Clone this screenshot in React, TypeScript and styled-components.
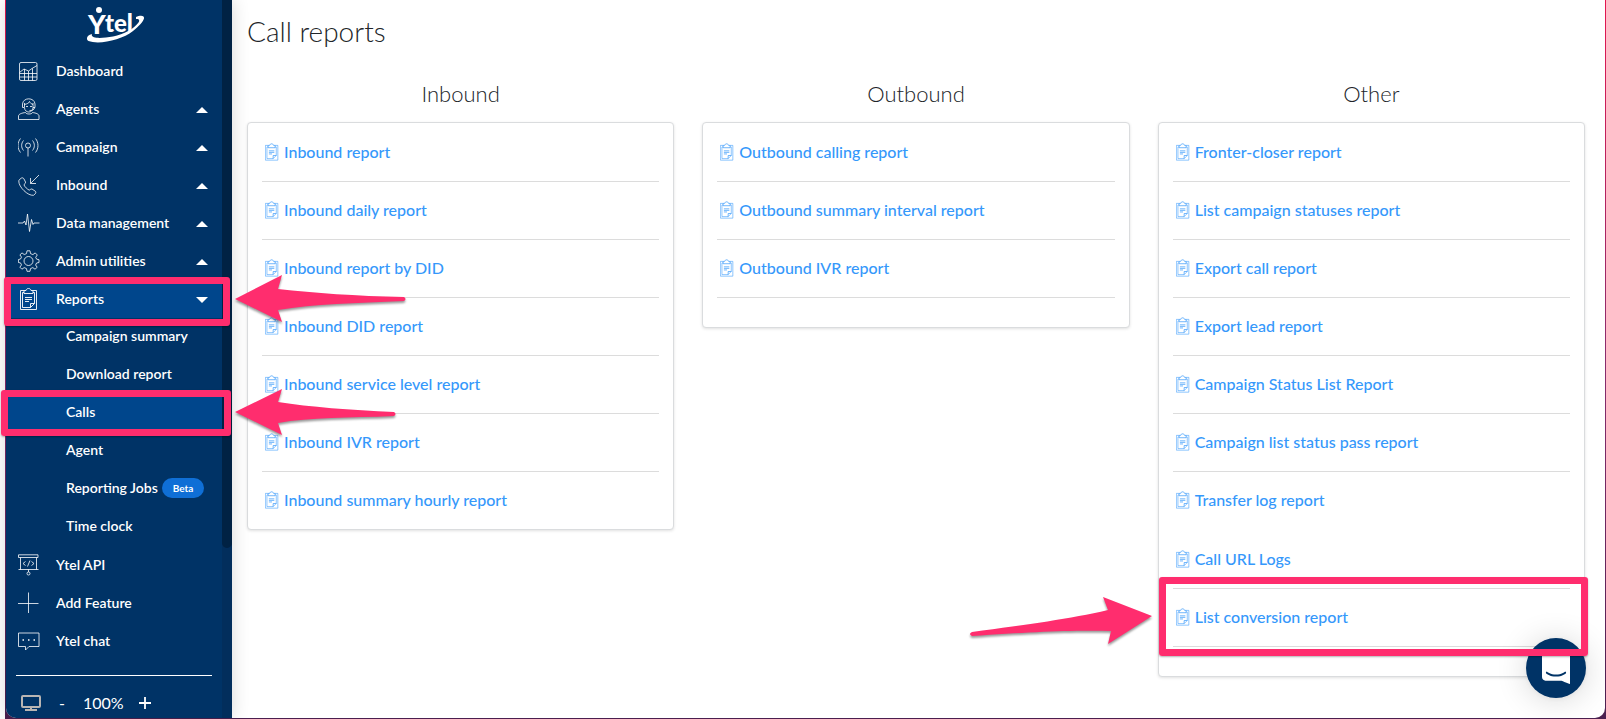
import React from 'react';
import styled, { createGlobalStyle, css } from 'styled-components';

const navy = '#003366';
const pink = '#ff2d6e';

const GlobalStyle = createGlobalStyle`
  *, *::before, *::after { box-sizing: border-box; }
  body {
    margin: 0;
    background: #fff;
    font-family: Lato, "Liberation Sans", sans-serif;
    color: #212529;
  }
  ul { list-style: none; margin: 0; padding: 0; }
  a { text-decoration: none; color: inherit; }
`;

const Frame = styled.div`
  display: flex;
  min-height: 100vh;
  margin-left: 5px;
  padding: 0 1px 1px;
  background: linear-gradient(to bottom, #e4164f, #8a2b6c 50%, #4b1f4f);
`;

const Window = styled.div`
  flex: 1;
  display: flex;
  min-width: 0;
  background: #fff;
  border-radius: 0 0 10px 10px;
`;

const Sidebar = styled.aside`
  position: relative;
  z-index: 2;
  flex: none;
  display: flex;
  width: 226px;
  background: ${navy};
  color: #fff;
  border-bottom-left-radius: 10px;
  box-shadow: 0 0 18px rgba(0, 0, 0, 0.16);
`;

const SidebarContent = styled.div`
  flex: 1;
`;

const ScrollTrack = styled.div`
  flex: none;
  width: 10px;
  background: #022e5c;
`;

const ScrollThumb = styled.div`
  height: 548px;
  border-radius: 0 0 5px 5px;
  background: #002244;
`;

const LogoLink = styled.a`
  display: flex;
  justify-content: center;
  height: 52px;
  padding: 6px 0 0 2px;
`;

const NavItem = styled.li`
  position: relative;
`;

const NavLink = styled.a<{ $active?: boolean }>`
  display: flex;
  align-items: center;
  gap: 16px;
  height: 38px;
  padding: 0 14px 0 12px;
  font-size: 14px;
  font-weight: 600;
  line-height: 20px;
  background: ${p => (p.$active ? '#00468c' : 'transparent')};
  svg { flex: none; }
`;

const NavLabel = styled.span`
  flex: 1;
`;

const SubLink = styled(NavLink)`
  gap: 4px;
  padding: 0 0 2px 60px;
`;

const Badge = styled.span`
  padding: 0 11px;
  border-radius: 10px;
  background: #0f6fd6;
  font-size: 10px;
  font-weight: 700;
  line-height: 20px;
`;

const Caret = styled.span<{ $down?: boolean }>`
  border: 6px solid transparent;
  ${p => p.$down
    ? css`border-top-color: #fff; border-bottom: 0;`
    : css`border-bottom-color: #fff; border-top: 0;`}
  margin-top: 2px;
`;

const ZoomBar = styled.div`
  display: flex;
  align-items: center;
  margin: 15px 10px 0;
  padding: 12px 0 0 5px;
  border-top: 1px solid #fff;
  font-size: 16px;
  line-height: 30px;
`;

const ZoomButton = styled.button`
  width: 42px;
  height: 30px;
  padding: 0;
  border: 0;
  background: none;
  color: #fff;
  font: inherit;
  font-size: 16px;
  display: grid;
  place-items: center;
`;

const Main = styled.main`
  flex: 1;
  min-width: 0;
  padding: 13px 20px 28px 15px;
`;

const PageTitle = styled.h1`
  margin: 0;
  font-size: 28px;
  font-weight: 300;
  line-height: 36px;
`;

const Columns = styled.div`
  display: grid;
  grid-template-columns: repeat(3, minmax(0, 1fr));
  align-items: start;
  gap: 28px;
  margin-top: 30px;
`;

const ColumnTitle = styled.h2`
  margin: 0 0 13px;
  font-size: 22px;
  font-weight: 300;
  line-height: 30px;
  text-align: center;
`;

const Card = styled.ul<{ $footer?: boolean }>`
  display: grid;
  row-gap: 1px;
  padding: 1px 14px ${p => (p.$footer ? 30 : 0)}px;
  border: 1px solid #dadcde;
  border-radius: 4px;
  background: #fff;
  box-shadow: 0 1px 3px rgba(0, 0, 0, 0.12);
`;

const ReportRow = styled.li<{ $divider: boolean }>`
  position: relative;
  display: flex;
  align-items: center;
  height: 57px;
  padding: 0 0 2px 3px;
  box-shadow: ${p => (p.$divider ? '0 1px 0 #dcdcdc' : 'none')};
  &:not(:last-child) { margin-bottom: ${p => (p.$divider ? 0 : 1)}px; }
`;

const ReportLink = styled.a`
  display: flex;
  align-items: center;
  gap: 5px;
  color: #3598fb;
  font-size: 16px;
  font-weight: 500;
  line-height: 22px;
`;

const ChatButton = styled.button`
  position: fixed;
  right: 20px;
  bottom: 21px;
  z-index: 1;
  display: grid;
  place-items: center;
  width: 60px;
  height: 60px;
  padding: 0;
  border: 0;
  border-radius: 50%;
  background: ${navy};
  box-shadow: 0 1px 6px rgba(0, 0, 0, 0.06), 0 2px 32px rgba(0, 0, 0, 0.16);
`;

const Highlight = styled.span<{ $inset: string }>`
  position: absolute;
  z-index: 3;
  inset: ${p => p.$inset};
  border: 7px solid ${pink};
  border-radius: 3px;
  box-shadow: 0 1px 2px rgba(0, 0, 0, 0.3);
  pointer-events: none;
`;

const Pointer = styled.svg<{ $side: 'left' | 'right' }>`
  position: absolute;
  z-index: 3;
  top: 50%;
  ${p => (p.$side === 'right'
    ? css`left: 229px; margin-top: -24px;`
    : css`right: calc(100% + 21px); margin-top: -22px;`)}
  overflow: visible;
  filter: drop-shadow(0 2px 1px rgba(0, 0, 0, 0.4));
  pointer-events: none;
`;

const Logo = () => (
  <svg width="62" height="38" viewBox="0 0 62 38" fill="#fff" role="img" aria-label="Ytel">
    <circle cx="15" cy="4" r="3" />
    <text y="28" fontFamily="Lato" fontWeight="900">
      <tspan x="4" fontSize="27">Y</tspan>
      <tspan x="21" y="26" fontSize="24">tel</tspan>
    </text>
    <path d="M8 28C3 29 1.500 33 4.500 35C15 39 38 34 49 25C55 20 59 16 60 12.500C60.500 9 56 9 52 11V13C55 12.500 56 14 54.500 16.500C50 23 40 28 29 30.500C18 32.500 6 33 8 28Z" />
  </svg>
);

const Clipboard = ({ soft = false }: { soft?: boolean }) => (
  <svg width={soft ? 14 : 22} height={soft ? 18 : 22} viewBox={soft ? '2 0 18 22' : '0 0 22 22'} fill="none" stroke={soft ? '#3598fb' : '#fff'} strokeWidth="0.9" aria-hidden="true">
    <path d="M6 2.500H2.500V21.500H18.500V2.500H15" opacity={soft ? 0.8 : 1} />
    <path d="M6 4.500H4.500V19.500H12.500L16.500 15.500V4.500H15" opacity={soft ? 0.8 : 1} />
    <path d="M12.500 19.500V15.500H16.500M6 5.500V2.500H8C8.500 -.2 12.500 -.2 13 2.500H15V5.500Z" />
    <path d="M7 9.500H14M7 11.500H14M7 13.500H11" />
  </svg>
);

const Line = ({ children }: { children: React.ReactNode }) => (
  <svg width="22" height="22" viewBox="0 0 22 22" fill="none" stroke="#fff" strokeWidth="0.8" strokeLinejoin="round" aria-hidden="true">
    {children}
  </svg>
);

const icons = {
  dashboard: (
    <Line>
      <rect x="1.500" y="2.500" width="17.500" height="18" rx="1.500" />
      <path d="M1.500 12.500L6 9L10.500 11L14 8.500L19 5.500M6.500 9V20.500M10.500 11V20.500M14.500 8.500V20.500M1.500 13.500H19M1.500 17H19" />
    </Line>
  ),
  agents: (
    <Line>
      <path d="M.5 21.500V18C.5 16 4 15 7.500 14.500C8 16.500 14 16.500 14.500 14.500C18 15 21 16 21 18V21.500Z" />
      <path d="M6.500 5V9.500C6.500 15.500 15 15.500 15 9.500V5M6 9.500H4.500V6C5 -.9 16.500 -.9 17 6V9.500H15M6.500 6.500C9 6 11 5 11.500 3.500C12.500 5.500 13.500 6 15 6.500M16.500 9.500C16.500 12 14 12.500 11.500 12.500M8 8.500H10M12 8.500H14" />
    </Line>
  ),
  campaign: (
    <Line>
      <circle cx="10" cy="9.500" r="2.500" />
      <path d="M10 12V20.500M5.500 4.500C3 7.500 3 11.500 5.500 14.500M14.500 4.500C17 7.500 17 11.500 14.500 14.500M2.500 2.500C-.8 6.500-.8 12.500 2.500 16.500M17.500 2.500C20.800 6.500 20.800 12.500 17.500 16.500" />
    </Line>
  ),
  inbound: (
    <Line>
      <path d="M21 1L12.500 9.500M12.500 4V9.500H18" />
      <path d="M1.500 5.500L3.500 4C4.500 3.500 5.500 4 6 5L7.500 8C8 9.500 6 10 6 11C7 13 9 15 11 16C12 16.500 12.500 14.500 14 15L17 17C18 17.500 18 18.500 17.500 19.500L15.500 21.300C10 22 .5 13 .8 7C.9 6.300 1 6 1.500 5.500Z" />
    </Line>
  ),
  data: (
    <Line>
      <path d="M0 11H5L6.500 9L8 13L9.500 2L11.500 19.500L13.500 7.500L15 12.500L16 11H21.500" />
    </Line>
  ),
  admin: (
    <Line>
      <circle cx="10.500" cy="11" r="4.500" />
      <path d="M9 .8H12L12.500 3.600L14.900 4.600L17.200 2.900L19.300 5L17.700 7.300L18.700 9.200L21 9.700V12.500L18.600 13L17.600 15L19.200 17.300L17 19.200L14.800 17.600L12.500 18.600L12 21.300H9L8.500 18.600L6.200 17.600L3.900 19.200L1.900 17.200L3.500 14.900L2.500 12.900L.4 12.500V9.600L2.500 9L3.500 7.100L1.900 4.900L4 2.900L6.200 4.500L8.500 3.600Z" />
    </Line>
  ),
  reports: <Clipboard />,
  api: (
    <Line>
      <path d="M.5 .8H20V3.500H.5ZM2.500 3.500V15.500M18.500 3.500V15.500M.5 15.500H20.500M10.500 15.500V18M7.500 7.500L5 9.500L7.500 11.500M13.500 7.500L16 9.500L13.500 11.500M12 6.500L9.500 12.500" />
      <circle cx="10.500" cy="19.500" r="1.500" />
    </Line>
  ),
  add: <Line><path d="M10.500 .5V21M0 11.500H20.500" /></Line>,
  chat: (
    <Line>
      <path d="M.5 3H21V16.500H11L7.500 20V16.500H.5Z" />
      <path d="M4.500 10H6M10 10H11.500M15.500 10H17" strokeWidth="1.600" />
    </Line>
  ),
};

type Entry = { icon: keyof typeof icons; label: string; expandable?: boolean };

const topItems: Entry[] = [
  { icon: 'dashboard', label: 'Dashboard' },
  { icon: 'agents', label: 'Agents', expandable: true },
  { icon: 'campaign', label: 'Campaign', expandable: true },
  { icon: 'inbound', label: 'Inbound', expandable: true },
  { icon: 'data', label: 'Data management', expandable: true },
  { icon: 'admin', label: 'Admin utilities', expandable: true },
];

const reportItems = ['Campaign summary', 'Download report', 'Calls', 'Agent', 'Reporting Jobs', 'Time clock'];

const bottomItems: Entry[] = [
  { icon: 'api', label: 'Ytel API' },
  { icon: 'add', label: 'Add Feature' },
  { icon: 'chat', label: 'Ytel chat' },
];

type Column = { title: string; footer: boolean; reports: string[]; undivided: string[] };

const columns: Column[] = [
  {
    title: 'Inbound',
    footer: false,
    reports: ['Inbound report', 'Inbound daily report', 'Inbound report by DID', 'Inbound DID report', 'Inbound service level report', 'Inbound IVR report', 'Inbound summary hourly report'],
    undivided: ['Inbound summary hourly report'],
  },
  {
    title: 'Outbound',
    footer: true,
    reports: ['Outbound calling report', 'Outbound summary interval report', 'Outbound IVR report'],
    undivided: [],
  },
  {
    title: 'Other',
    footer: true,
    reports: ['Fronter-closer report', 'List campaign statuses report', 'Export call report', 'Export lead report', 'Campaign Status List Report', 'Campaign list status pass report', 'Transfer log report', 'Call URL Logs', 'List conversion report'],
    undivided: ['Transfer log report'],
  },
];

const NavEntry = ({ icon, label, expandable }: Entry) => (
  <NavItem>
    <NavLink href="#">
      {icons[icon]}
      <NavLabel>{label}</NavLabel>
      {expandable && <Caret />}
    </NavLink>
  </NavItem>
);

export default function App() {
  return (
    <>
      <GlobalStyle />
      <Frame>
        <Window>
          <Sidebar>
            <SidebarContent>
              <LogoLink href="#"><Logo /></LogoLink>
              <nav>
                <ul>
                  {topItems.map(item => <NavEntry key={item.label} {...item} />)}
                  <NavItem>
                    <NavItem as="div">
                      <NavLink href="#" $active>
                        {icons.reports}
                        <NavLabel>Reports</NavLabel>
                        <Caret $down />
                      </NavLink>
                      <Highlight $inset="-3px -8px -8px -2px" />
                      <Pointer $side="right" width="172" height="48" viewBox="0 0 172 48" fill={pink}>
                        <path d="M0 24L47 0L43 14C80 18 120 21 169 22Q172 24 169 26C120 28 80 29 43 35L47 47Z" />
                      </Pointer>
                    </NavItem>
                    <ul>
                      {reportItems.map(label => (
                        <NavItem key={label}>
                          <SubLink href="#" $active={label === 'Calls'}>
                            {label}
                            {label === 'Reporting Jobs' && <Badge>Beta</Badge>}
                          </SubLink>
                          {label === 'Calls' && (
                            <>
                              <Highlight $inset="-4px -9px -4px -5px" />
                              <Pointer $side="right" width="162" height="48" viewBox="0 0 162 48" fill={pink}>
                                <path d="M0 23L47 0L43 13C75 18 115 21 159 23Q162 25 159 27C115 29 75 28 43 34L47 46Z" />
                              </Pointer>
                            </>
                          )}
                        </NavItem>
                      ))}
                    </ul>
                  </NavItem>
                  {bottomItems.map(item => <NavEntry key={item.label} {...item} />)}
                </ul>
              </nav>
              <ZoomBar>
                <svg width="20" height="16" viewBox="0 0 20 16" fill="none" stroke="#b9b5b3" strokeWidth="2" aria-hidden="true">
                  <rect x="1" y="1" width="18" height="11" rx="1" />
                  <path d="M10 12V15M4 15H16" />
                </svg>
                <ZoomButton aria-label="Zoom out">-</ZoomButton>
                <span>100%</span>
                <ZoomButton aria-label="Zoom in">
                  <svg width="12" height="12" viewBox="0 0 12 12" stroke="#fff" strokeWidth="1.800" aria-hidden="true"><path d="M6 0V12M0 6H12" /></svg>
                </ZoomButton>
              </ZoomBar>
            </SidebarContent>
            <ScrollTrack><ScrollThumb /></ScrollTrack>
          </Sidebar>
          <Main>
            <PageTitle>Call reports</PageTitle>
            <Columns>
              {columns.map(col => (
                <section key={col.title}>
                  <ColumnTitle>{col.title}</ColumnTitle>
                  <Card $footer={col.footer}>
                    {col.reports.map(name => (
                      <ReportRow key={name} $divider={!col.undivided.includes(name)}>
                        <ReportLink href="#"><Clipboard soft />{name}</ReportLink>
                        {name === 'List conversion report' && (
                          <>
                            <Highlight $inset="-12px -18px -10px -14px" />
                            <Pointer $side="left" width="182" height="48" viewBox="0 0 182 48" fill={pink}>
                              <path d="M182 20L133 1L138 14C100 23 60 28 2 36Q-2 38 2 40C60 36 100 34 141 35L138 48Z" />
                            </Pointer>
                          </>
                        )}
                      </ReportRow>
                    ))}
                  </Card>
                </section>
              ))}
            </Columns>
          </Main>
        </Window>
      </Frame>
      <ChatButton aria-label="Open chat">
        <svg width="28" height="32" viewBox="0 0 28 32" fill="#fff" aria-hidden="true">
          <path d="M28 32s-4.714-1.855-8.527-3.340H3.437C1.540 28.660 0 27.026 0 25.013V3.644C0 1.633 1.540 0 3.437 0h21.125c1.898 0 3.437 1.632 3.437 3.645v18.404H28V32zm-4.139-11.982a.88.88 0 00-1.292-.105c-.03.026-3.015 2.681-8.570 2.681-5.486 0-8.517-2.636-8.571-2.684a.88.88 0 00-1.290.107 1.010 1.010 0 00-.219.708.992.992 0 00.318.664c.142.128 3.537 3.150 9.762 3.150 6.226 0 9.621-3.022 9.763-3.150a.992.992 0 00.317-.664 1.010 1.010 0 00-.218-.707z" />
        </svg>
      </ChatButton>
    </>
  );
}
